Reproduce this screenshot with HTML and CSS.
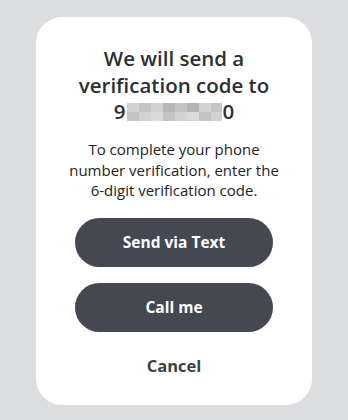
FILE: index.html
```html
<!DOCTYPE html>
<html>
<head>
<meta charset="utf-8">
<link rel="stylesheet" href="styles.css">
</head>
<body>
<div class="screen">
  <div class="card">
    <h1 class="title">We will send a<br>verification code to<br>
      <span class="phone"><span>9</span><span class="blur">
        <i class="b1"></i><i class="b2"></i><i class="b1"></i><i class="b3"></i><i class="b2"></i><i class="b3"></i><i class="b1"></i><i class="b2"></i>
        <i class="b2"></i><i class="b1"></i><i class="b4"></i><i class="b2"></i><i class="b1"></i><i class="b4"></i><i class="b2"></i><i class="b1"></i>
      </span><span>0</span></span>
    </h1>
    <p class="desc">To complete your phone number verification, enter the 6-digit verification code.</p>
    <div class="actions">
      <button class="btn">Send via Text</button>
      <button class="btn">Call me</button>
      <button class="cancel">Cancel</button>
    </div>
  </div>
</div>
</body>
</html>
```
FILE: styles.css
```css
html, body {
  margin: 0;
  padding: 0;
  background: #dcdddf;
  font-family: "Open Sans", "Noto Sans", sans-serif;
}
.screen {
  width: 348px;
  height: 420px;
  display: flex;
  justify-content: center;
  padding-top: 17px;
  box-sizing: border-box;
}
.card {
  width: 276px;
  height: 388px;
  background: #ffffff;
  border-radius: 26px;
  display: flex;
  flex-direction: column;
  align-items: center;
  box-sizing: border-box;
  padding-top: 28px;
}
.title {
  margin: 0;
  font-size: 20.5px;
  line-height: 27px;
  font-weight: 600;
  color: #2e3032;
  text-align: center;
}
.phone {
  display: inline-flex;
  align-items: center;
  vertical-align: top;
  margin-top: -1px;
}
.blur {
  display: grid;
  grid-template-columns: repeat(8, 12px);
  grid-template-rows: 9px 9px;
  width: 95px;
  overflow: hidden;
  margin: 0 1px;
}
.blur i { display: block; }
.b1 { background: #d2d2d4; }
.b2 { background: #c4c4c6; }
.b3 { background: #b6b6b8; }
.b4 { background: #dadadc; }
.desc {
  margin: 13px 0 0;
  width: 222px;
  font-size: 15px;
  line-height: 20.5px;
  color: #222426;
  text-align: center;
}
.actions {
  display: flex;
  flex-direction: column;
  align-items: center;
  margin-top: 17px;
}
.btn {
  width: 198px;
  height: 49px;
  border: 0;
  border-radius: 25px;
  background: #434852;
  color: #ffffff;
  font-family: "Open Sans", "Noto Sans", sans-serif;
  font-size: 15.5px;
  font-weight: 700;
  margin-bottom: 16px;
  padding: 0;
}
.cancel {
  border: 0;
  background: none;
  color: #3b3f46;
  font-family: "Open Sans", "Noto Sans", sans-serif;
  font-size: 16.5px;
  font-weight: 700;
  margin-top: 6px;
  padding: 0;
}
```
